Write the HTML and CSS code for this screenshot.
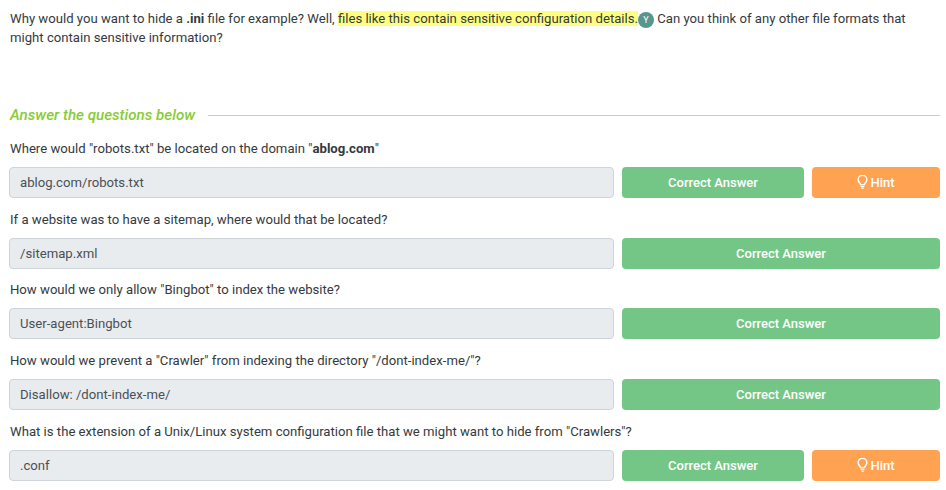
FILE: index.html
```html
<!DOCTYPE html>
<html lang="en">
<head>
<meta charset="utf-8">
<title>Answer the questions below</title>
<link rel="stylesheet" href="styles.css">
</head>
<body>
<p class="intro">Why would you want to hide a <b>.ini</b> file for example? Well, <mark>files like this contain sensitive configuration details.</mark><span class="avatar">Y</span> Can you think of any other file formats that might contain sensitive information?</p>
<div class="heading"><em>Answer the questions below</em><span class="rule"></span></div>
<div class="qa">
  <p class="q">Where would "robots.txt" be located on the domain "<b>ablog.com</b>"</p>
  <div class="row"><div class="answer">ablog.com/robots.txt</div><div class="btn ok">Correct Answer</div><div class="btn hint"><svg class="bulb" viewBox="0 0 12 16" width="11" height="14"><path d="M3.8 11C3.5 9.2 1 8 1 5.300a5 5 0 0 1 10 0c0 2.700-2.500 3.900-2.800 5.700z" fill="none" stroke="#fff" stroke-width="1.600"/><path d="M3.800 13h4.400M4.500 15h3" stroke="#fff" stroke-width="1.600" fill="none"/></svg>Hint</div></div>
  <p class="q">If a website was to have a sitemap, where would that be located?</p>
  <div class="row"><div class="answer">/sitemap.xml</div><div class="btn ok wide">Correct Answer</div></div>
  <p class="q">How would we only allow "Bingbot" to index the website?</p>
  <div class="row"><div class="answer">User-agent:Bingbot</div><div class="btn ok wide">Correct Answer</div></div>
  <p class="q">How would we prevent a "Crawler" from indexing the directory "/dont-index-me/"?</p>
  <div class="row"><div class="answer">Disallow: /dont-index-me/</div><div class="btn ok wide">Correct Answer</div></div>
  <p class="q">What is the extension of a Unix/Linux system configuration file that we might want to hide from "Crawlers"?</p>
  <div class="row"><div class="answer">.conf</div><div class="btn ok">Correct Answer</div><div class="btn hint"><svg class="bulb" viewBox="0 0 12 16" width="11" height="14"><path d="M3.8 11C3.5 9.2 1 8 1 5.300a5 5 0 0 1 10 0c0 2.700-2.500 3.900-2.800 5.700z" fill="none" stroke="#fff" stroke-width="1.600"/><path d="M3.800 13h4.400M4.500 15h3" stroke="#fff" stroke-width="1.600" fill="none"/></svg>Hint</div></div>
</div>
</body>
</html>
```
FILE: styles.css
```css
* { box-sizing: border-box; }
html, body { margin: 0; background: #fff; }
body {
  width: 946px;
  height: 490px;
  overflow: hidden;
  padding: 9px 6px 0 10px;
  font-family: Roboto, "Noto Sans", sans-serif;
  font-size: 13.15px;
  color: #343a40;
}
.intro { margin: 0; line-height: 19px; width: 900px; }
.intro b, .q b { font-weight: 700; }
mark { background: #ffff7f; color: inherit; }
.avatar {
  display: inline-block;
  width: 16px;
  height: 16px;
  margin-top: 3px;
  border-radius: 50%;
  background: #57958f;
  color: #fff;
  font-size: 9px;
  line-height: 16px;
  text-align: center;
  vertical-align: top;
}
.heading { display: flex; align-items: center; gap: 13px; margin-top: 58px; height: 20px; }
.heading em { color: #88cc33; font-size: 15.15px; font-weight: 500; font-style: italic; white-space: nowrap; }
.rule { flex: 1; height: 1px; background: #ccc; }
.qa { display: flex; flex-direction: column; margin-top: 13.9px; }
.q { margin: 0; height: 19px; line-height: 19px; }
.row { display: flex; gap: 8px; margin: 9px 0 11.75px -1px; height: 31px; }
.answer {
  width: 605px;
  flex: none;
  background: #e9ecef;
  border: 1px solid #ced4da;
  border-radius: 4px;
  padding: 0 10px;
  line-height: 29px;
  color: #495057;
}
.btn {
  display: flex;
  align-items: center;
  justify-content: center;
  border-radius: 4px;
  color: #fff;
  font-weight: 500;
  font-size: 13px;
  flex: none;
}
.ok { background: #74c687; width: 182px; }
.ok.wide { width: 318px; }
.hint { background: #ffa352; width: 128px; gap: 2px; }
```
